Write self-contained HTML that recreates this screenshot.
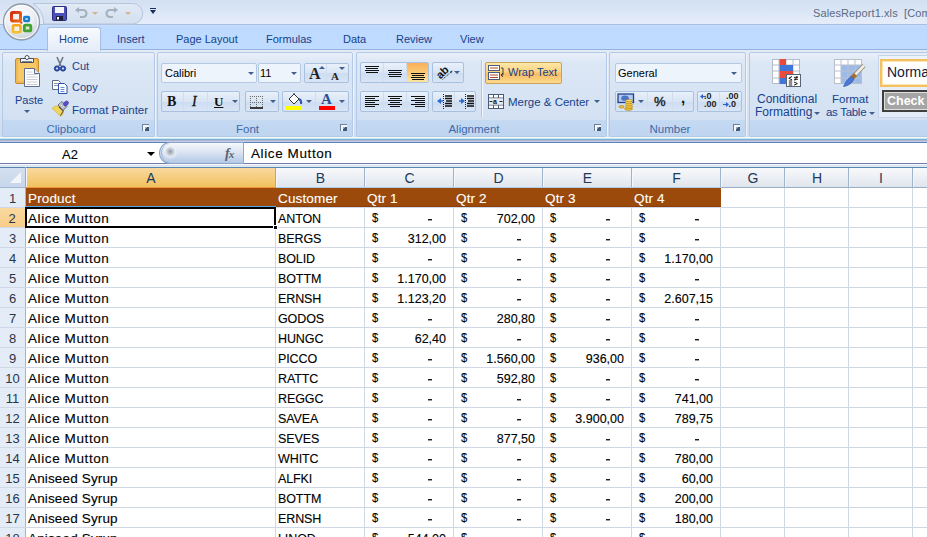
<!DOCTYPE html>
<html><head><meta charset="utf-8">
<style>
*{margin:0;padding:0;box-sizing:border-box}
html,body{width:927px;height:537px;overflow:hidden;background:#fff;font-family:"Liberation Sans",sans-serif;position:relative}
div,span{position:absolute}
span{white-space:nowrap}
svg{overflow:visible}
.t{font-size:11px;color:#15428b;white-space:nowrap;line-height:13px}
#title{left:0;top:0;width:927px;height:25px;background:linear-gradient(#d3e0f2,#d9e5f5 40%,#e4ecf9 90%);border-bottom:1px solid #a9bfe0}
#tabs{left:0;top:25px;width:927px;height:24px;background:linear-gradient(#c8defa,#bfdaff 10%,#bfdbff)}
#ribbon{left:0;top:49px;width:927px;height:91px;background:linear-gradient(#e2eaf6,#d6e3f3 70%,#cbdcf0);border-top:1px solid #94b2dc}
.grp{height:85px;border:1px solid #b3c9e6;border-radius:2px;background:linear-gradient(#e8eff9,#dce7f5 12%,#d6e3f3 60%,#d0def2);overflow:hidden;box-shadow:1px 0 0 #eef3fa}
.glbl2{left:0;width:100%;bottom:0;height:16px;background:linear-gradient(#c4d9f2,#bfd5f0)}
.sep{width:1px;background:#d0dded}
.lines i{position:absolute;left:0;width:14px;height:1px;background:#111}
.glbl{left:0;bottom:0;height:16px;z-index:1;text-align:center;font-size:11.5px;color:#3e6aaa;line-height:19px;white-space:nowrap}
.launch{width:7px;height:7px;border-top:1px solid #6f8099;border-left:1px solid #6f8099;background:#f4f8fc;bottom:5px;right:5px;z-index:2}
.launch:after{content:'';position:absolute;right:0;bottom:0;width:4px;height:4px;background:linear-gradient(135deg,#9ab 30%,#3d5a7a 31%)}
.btngrp{border:1px solid #a9c0df;border-radius:2px;background:linear-gradient(#e8f0fa,#d9e5f5 50%,#cddcf1 51%,#d9e5f5)}
.combo{border:1px solid #b6c9e2;border-radius:2px;background:#eef4fb}
.arr{width:0;height:0;border-left:3px solid transparent;border-right:3px solid transparent;border-top:3px solid #3f5f8c}
#grid{left:0;top:0;width:927px;height:537px;overflow:hidden}
#fbar{left:0;top:140px;width:927px;height:27px;background:#fff}
.ch{top:167px;height:21px;background:linear-gradient(#f8f9fb,#eceff4 50%,#e0e5ed);border-top:1px solid #5c86b0;border-bottom:1px solid #9aaec8;box-shadow:inset 1px 0 0 #f4f7fb;text-align:center;font-size:14px;color:#1e395b;line-height:21px}
.ch.sel{background:linear-gradient(#f9d99f,#f1c15f);border-bottom-color:#f29536}
.corner{left:0;top:167px;width:26px;height:21px;background:linear-gradient(#d4e0f0,#c7d6ea);border-top:1px solid #5c80ad;border-right:1px solid #9eb6ce;border-bottom:1px solid #9eb6ce}
.tri{left:10px;top:172px;width:0;height:0;border-left:11px solid transparent;border-bottom:11px solid #f2f5fa}
.rh{left:0;width:25px;height:20px;background:#e4ecf7;text-align:center;font-size:13px;color:#2a3444;line-height:22px}
.rh.sel{background:linear-gradient(#f9d99f,#f7cd88);border-top:1px solid #f29536;border-bottom:1px solid #f29536;border-right:1px solid #f29536}
.hl{left:0;width:927px;height:1px;background:#d0d7e5}
.hl2{left:0;width:25px;height:1px;background:#9eb6ce}
.vl2{left:25px;top:167px;width:1px;height:370px;background:#9eb6ce}
.vl{top:188px;width:1px;height:370px;background:#d0d7e5}
.vh{top:168px;width:1px;height:20px;background:#9fb3cc}
.brown{background:#9b4a0b}
.c{height:20px;font-size:13.5px;line-height:20px;color:#000;white-space:nowrap;letter-spacing:0.15px;-webkit-text-stroke:0.12px #000}
.c.w{-webkit-text-stroke:0.12px #fff}
.c.dl{font-size:14px;transform:scaleX(0.9);transform-origin:0 0;-webkit-text-stroke:0.1px #000}
.c.k{font-size:12.5px;letter-spacing:-0.1px}
.c.w{color:#fff}
.c.n{font-size:12.5px;letter-spacing:0}
.selbox{left:25px;top:207px;width:251px;height:21px;border:2px solid #000}
</style></head><body>

<div id="title"></div>
<svg style="position:absolute;left:0;top:0" width="150" height="26" viewBox="0 0 150 26">
  <defs><linearGradient id="qg" x1="0" y1="0" x2="0" y2="1"><stop offset="0" stop-color="#e1eaf6"/><stop offset="1" stop-color="#d3e0f0"/></linearGradient></defs>
  <path d="M33 3.5H132.5A10.25 10.25 0 0 1 132.5 24H43.5A22 22 0 0 0 33 3.5Z" fill="url(#qg)" stroke="#b5c6dc" stroke-width="1"/>
</svg>
<span class="t" style="left:813px;top:7px;color:#5c6a80;font-size:11px;letter-spacing:0.1px">SalesReport1.xls&nbsp; [Com</span>
<div id="tabs"></div>
<span class="t" style="left:59px;top:33px">Home</span>
<span class="t" style="left:117px;top:33px">Insert</span>
<span class="t" style="left:176px;top:33px">Page Layout</span>
<span class="t" style="left:266px;top:33px">Formulas</span>
<span class="t" style="left:343px;top:33px">Data</span>
<span class="t" style="left:396px;top:33px">Review</span>
<span class="t" style="left:460px;top:33px">View</span>
<div id="ribbon"></div>
<div style="left:47px;top:27px;width:54px;height:24px;border:1px solid #a6bfe0;border-bottom:none;border-radius:3px 3px 0 0;background:linear-gradient(#f8fbff,#e4ecf8)"></div>
<span class="t" style="left:59px;top:33px">Home</span>
<!-- groups -->
<div class="grp" style="left:2px;top:52px;width:153px"><div class="glbl2"></div><div class="glbl" style="width:136px">Clipboard</div><div class="launch"></div></div>
<div class="grp" style="left:157px;top:52px;width:196px"><div class="glbl2"></div><div class="glbl" style="width:179px">Font</div><div class="launch"></div></div>
<div class="grp" style="left:356px;top:52px;width:251px"><div class="glbl2"></div><div class="glbl" style="width:234px">Alignment</div><div class="launch"></div></div>
<div class="grp" style="left:609px;top:52px;width:137px"><div class="glbl2"></div><div class="glbl" style="width:120px">Number</div><div class="launch"></div></div>
<div class="grp" style="left:749px;top:52px;width:200px"><div class="glbl2" style="width:100%"></div></div>

<!-- Clipboard -->
<svg style="position:absolute;left:14px;top:55px" width="28" height="33" viewBox="0 0 28 33">
  <rect x="1.5" y="3.5" width="23" height="25" rx="1.5" fill="#f2b851" stroke="#c68a2e"/>
  <rect x="4" y="6" width="18" height="20" fill="#f6c866"/>
  <path d="M6.5 3.5h13v4h-13z" fill="#f2f4f7" stroke="#4a4f5c"/>
  <path d="M8 6.5h10" stroke="#7b8190"/>
  <circle cx="13" cy="2.5" r="2" fill="#fff" stroke="#4a4f5c"/>
  <path d="M10.5 13.5h10l5 5v13h-15z" fill="#fff" stroke="#5e6c85"/>
  <path d="M20.5 13.5v5h5" fill="#e8edf5" stroke="#5e6c85"/>
  <path d="M12.5 17h6M12.5 19.5h11M12.5 22h11M12.5 24.5h11M12.5 27h11M12.5 29.5h11" stroke="#b9c2d0" stroke-width="0.8"/>
</svg>
<span class="t" style="left:15px;top:94px">Paste</span>
<div class="arr" style="left:24px;top:110px"></div>
<svg style="position:absolute;left:54px;top:57px" width="12" height="15" viewBox="0 0 12 15">
  <path d="M3 0l4 9M9 0L5 9" stroke="#6f7784" stroke-width="1.6"/>
  <circle cx="3" cy="11.5" r="2.6" fill="#2f56b8" stroke="#1f3a8a"/>
  <circle cx="9" cy="11.5" r="2.6" fill="#2f56b8" stroke="#1f3a8a"/>
  <circle cx="3" cy="11.5" r="1" fill="#e8eefc"/><circle cx="9" cy="11.5" r="1" fill="#e8eefc"/>
</svg>
<span class="t" style="left:72px;top:60px">Cut</span>
<svg style="position:absolute;left:52px;top:80px" width="16" height="14" viewBox="0 0 16 14">
  <path d="M0.5 0.5h6l2 2v7h-8z" fill="#fff" stroke="#5f6b80"/>
  <path d="M2 3.5h4M2 5.5h4" stroke="#8d97a8"/>
  <path d="M6.5 3.5h6l2.5 2.5v7.5h-8.5z" fill="#fff" stroke="#2c52a8"/>
  <path d="M8.5 7.5h4M8.5 9.5h4M8.5 11.5h4" stroke="#6d8ccc"/>
</svg>
<span class="t" style="left:72px;top:81px">Copy</span>
<svg style="position:absolute;left:51px;top:101px" width="18" height="16" viewBox="0 0 18 16">
  <path d="M1 7.5C3 5 6 4.5 8 5l4.5 4.5c0.5 2-0.5 4.5-3 6C7 13 4 9.5 1 7.5z" fill="#f0d55a" stroke="#c9ac3c" stroke-width="0.6"/>
  <path d="M8 5.5l4 4" stroke="#2d2d2d" stroke-width="1.2"/>
  <path d="M9.5 14.5l3-5" stroke="#4a4a3a" stroke-width="1"/>
  <path d="M7 4l4-3.5 5 5-4 4z" fill="#b8bcc6" stroke="#555b68" stroke-width="0.8"/>
  <path d="M8.5 3.5l1-1M10 5l1-1M11.5 6.5l1-1" stroke="#fff" stroke-width="0.8"/>
  <ellipse cx="15" cy="2.5" rx="2.8" ry="2" transform="rotate(-45 15 2.5)" fill="#5b4fd0" stroke="#3a2f9a" stroke-width="0.6"/>
</svg>
<span class="t" style="left:72px;top:104px;font-size:11.5px">Format Painter</span>

<!-- Font -->
<div class="combo" style="left:161px;top:63px;width:96px;height:20px"></div>
<span class="t" style="left:165px;top:67px;color:#000">Calibri</span>
<div class="arr" style="left:248px;top:72px"></div>
<div class="combo" style="left:258px;top:63px;width:43px;height:20px"></div>
<span class="t" style="left:260px;top:67px;color:#000">11</span>
<div class="arr" style="left:291px;top:72px"></div>
<div class="btngrp" style="left:304px;top:63px;width:45px;height:20px"></div>
<div class="sep" style="left:326px;top:64px;height:18px"></div>
<span style="left:309px;top:66px;font-family:'Liberation Serif',serif;font-weight:bold;font-size:16px;line-height:16px;color:#222">A</span>
<div class="arr" style="left:319px;top:66px;border-top:none;border-bottom:3px solid #3f5f8c"></div>
<span style="left:331px;top:71px;font-family:'Liberation Serif',serif;font-weight:bold;font-size:11px;line-height:11px;color:#222">A</span>
<div class="arr" style="left:339px;top:67px"></div>

<div class="btngrp" style="left:161px;top:91px;width:79px;height:21px"></div>
<div class="sep" style="left:183px;top:92px;height:19px"></div>
<div class="sep" style="left:207px;top:92px;height:19px"></div>
<span style="left:167px;top:95px;font-family:'Liberation Serif',serif;font-weight:bold;font-size:14px;line-height:13px;color:#111">B</span>
<span style="left:192px;top:95px;font-family:'Liberation Serif',serif;font-style:italic;font-size:14px;line-height:13px;color:#111;-webkit-text-stroke:0.3px #111">I</span>
<span style="left:214px;top:95px;font-family:'Liberation Serif',serif;font-weight:bold;font-size:13px;line-height:13px;color:#111;text-decoration:underline">U</span>
<div class="arr" style="left:232px;top:100px"></div>
<div class="btngrp" style="left:245px;top:91px;width:34px;height:21px"></div>
<svg style="position:absolute;left:250px;top:96px" width="13" height="13" viewBox="0 0 13 13">
  <path d="M0 0.5h13M0 6.5h13M0.5 0v11M6.5 0v11M12.5 0v11" stroke="#6a6a6a" stroke-dasharray="1 1"/>
  <path d="M0 12h13" stroke="#111" stroke-width="1.6"/>
</svg>
<div class="arr" style="left:270px;top:100px"></div>
<div class="btngrp" style="left:282px;top:91px;width:67px;height:21px"></div>
<div class="sep" style="left:315px;top:92px;height:19px"></div>
<svg style="position:absolute;left:287px;top:93px" width="16" height="13" viewBox="0 0 16 13">
  <path d="M2 6l5-5 5 5-5 5z" fill="#fff" stroke="#333"/>
  <path d="M7 1V0" stroke="#333"/>
  <path d="M12 6c2 1 2.5 3 2 5" stroke="#2a57b5" stroke-width="2" fill="none"/>
</svg>
<div style="left:286px;top:106px;width:16px;height:4px;background:#ffff00"></div>
<div class="arr" style="left:306px;top:100px"></div>
<span style="left:321px;top:93px;font-family:'Liberation Serif',serif;font-weight:bold;font-size:15px;line-height:13px;color:#2b4f93">A</span>
<div style="left:319px;top:106px;width:16px;height:4px;background:#ff0000"></div>
<div class="arr" style="left:339px;top:100px"></div>

<!-- Alignment -->
<div class="btngrp" style="left:360px;top:62px;width:69px;height:21px"></div>
<div style="left:407px;top:63px;width:21px;height:19px;background:linear-gradient(#f8b058,#fbc874 50%,#fde5a0)"></div>
<div class="sep" style="left:383px;top:63px;height:19px"></div>
<div class="sep" style="left:406px;top:63px;height:19px"></div>
<div class="lines" style="left:365px;top:66px;width:14px"><i style="top:0"></i><i style="top:2px;left:1px;width:12px"></i><i style="top:4px"></i><i style="top:6px;left:1px;width:12px"></i></div>
<div class="lines" style="left:388px;top:70px;width:14px"><i style="top:0"></i><i style="top:2px;left:1px;width:12px"></i><i style="top:4px"></i><i style="top:6px;left:1px;width:12px"></i></div>
<div class="lines" style="left:411px;top:73px;width:14px"><i style="top:0"></i><i style="top:2px;left:1px;width:12px"></i><i style="top:4px"></i><i style="top:6px;left:1px;width:12px"></i></div>
<div class="btngrp" style="left:432px;top:62px;width:32px;height:21px"></div>
<svg style="position:absolute;left:436px;top:65px" width="18" height="16" viewBox="0 0 18 16">
  <path d="M6.5 14.5L15 7" stroke="#333" stroke-width="1" stroke-dasharray="1.2 0.8"/>
  <path d="M14 6.5l2.5-1-0.8 2.6z" fill="#333"/>
  <text x="6.5" y="11" text-anchor="middle" font-family="Liberation Sans" font-weight="bold" font-size="11" fill="#111" transform="rotate(-45 6.5 7.5)">ab</text>
</svg>
<div class="arr" style="left:454px;top:71px"></div>
<div class="btngrp" style="left:360px;top:91px;width:69px;height:21px"></div>
<div class="sep" style="left:383px;top:92px;height:19px"></div>
<div class="sep" style="left:406px;top:92px;height:19px"></div>
<div class="lines" style="left:365px;top:96px;width:14px"><i style="top:0px"></i><i style="top:2px;left:0px;width:10px"></i><i style="top:4px"></i><i style="top:6px;left:0px;width:10px"></i><i style="top:8px"></i><i style="top:10px;left:0px;width:10px"></i></div>
<div class="lines" style="left:388px;top:96px;width:14px"><i style="top:0px"></i><i style="top:2px;left:2px;width:10px"></i><i style="top:4px"></i><i style="top:6px;left:2px;width:10px"></i><i style="top:8px"></i><i style="top:10px;left:2px;width:10px"></i></div>
<div class="lines" style="left:411px;top:96px;width:14px"><i style="top:0px"></i><i style="top:2px;left:4px;width:10px"></i><i style="top:4px"></i><i style="top:6px;left:4px;width:10px"></i><i style="top:8px"></i><i style="top:10px;left:4px;width:10px"></i></div>
<div class="btngrp" style="left:432px;top:91px;width:44px;height:21px"></div>
<div class="sep" style="left:454px;top:92px;height:19px"></div>
<svg style="position:absolute;left:436px;top:94px" width="17" height="15" viewBox="0 0 17 15">
  <path d="M7.5 0v15" stroke="#222" stroke-dasharray="1 1"/>
  <path d="M9 2h7M9 4.5h7M10 7h6M9 9.5h7M9 12h7" stroke="#111" stroke-width="1.4"/>
  <path d="M1 7l4-3v6z" fill="#2f6ad0"/><path d="M4 7h3" stroke="#2f6ad0" stroke-width="1.5"/>
</svg>
<svg style="position:absolute;left:458px;top:94px" width="17" height="15" viewBox="0 0 17 15">
  <path d="M7.5 0v15" stroke="#222" stroke-dasharray="1 1"/>
  <path d="M9 2h7M9 4.5h7M10 7h6M9 9.5h7M9 12h7" stroke="#111" stroke-width="1.4"/>
  <path d="M7 7l-4-3v6z" fill="#2f6ad0"/><path d="M1 7h3" stroke="#2f6ad0" stroke-width="1.5"/>
</svg>
<div style="left:481px;top:60px;width:1px;height:57px;background:#b3c7e1"></div>
<div style="left:482px;top:60px;width:1px;height:57px;background:#f3f7fc"></div>
<div style="left:485px;top:62px;width:77px;height:22px;border:1px solid #c9a25a;border-radius:2px;background:linear-gradient(#fde7a8,#fbd27f 45%,#f8bd62 55%,#fcd98d)"></div>
<svg style="position:absolute;left:488px;top:65px" width="17" height="15" viewBox="0 0 17 15">
  <rect x="0.5" y="0.5" width="11" height="5" fill="#fff" stroke="#4a5a78"/>
  <rect x="0.5" y="7.5" width="11" height="7" fill="#fff" stroke="#4a5a78"/>
  <path d="M2 3h8M2 10h8M2 12.5h8" stroke="#b04a2a"/>
  <path d="M13 3h2v7h-2M13 10l2-2M13 10l2 2" stroke="#333" fill="none" stroke-width="0.9"/>
</svg>
<span class="t" style="left:508px;top:66px">Wrap Text</span>
<svg style="position:absolute;left:488px;top:94px" width="16" height="15" viewBox="0 0 16 15">
  <rect x="0.5" y="0.5" width="15" height="14" fill="#fff" stroke="#4a5a78"/>
  <path d="M0.5 4h15M0.5 11h15M5.5 0.5v3.5M10.5 0.5v3.5M5.5 11v4M10.5 11v4" stroke="#4a5a78"/>
  <rect x="1" y="4.5" width="14" height="6" fill="#e4e9f2"/>
  <path d="M1.5 7.5h3M11.5 7.5h3" stroke="#222"/>
  <text x="5" y="10" font-family="Liberation Sans" font-weight="bold" font-size="7" fill="#111">a</text>
</svg>
<span class="t" style="left:508px;top:96px;font-size:11.5px">Merge &amp; Center</span>
<div class="arr" style="left:594px;top:100px"></div>

<!-- Number -->
<div class="combo" style="left:615px;top:63px;width:127px;height:20px"></div>
<span class="t" style="left:618px;top:67px;color:#000">General</span>
<div class="arr" style="left:731px;top:72px"></div>
<div class="btngrp" style="left:615px;top:91px;width:79px;height:21px"></div>
<div class="sep" style="left:647px;top:92px;height:19px"></div>
<div class="sep" style="left:672px;top:92px;height:19px"></div>
<svg style="position:absolute;left:617px;top:93px" width="18" height="18" viewBox="0 0 18 18">
  <rect x="1" y="1" width="15.5" height="8.5" fill="#b5cbee" stroke="#1f3f94" stroke-width="1.3"/>
  <ellipse cx="8" cy="5.2" rx="3.8" ry="2.6" fill="#4b74c2"/>
  <ellipse cx="4.5" cy="13.8" rx="2.6" ry="1.3" fill="#f0bd2e" stroke="#9c7412" stroke-width="0.5"/>
  <ellipse cx="11.5" cy="16" rx="4" ry="1.4" fill="#f0bd2e" stroke="#9c7412" stroke-width="0.5"/>
  <ellipse cx="12" cy="13.8" rx="3.8" ry="1.4" fill="#f5c93c" stroke="#9c7412" stroke-width="0.5"/>
  <ellipse cx="12" cy="11.6" rx="3.6" ry="1.3" fill="#f5c93c" stroke="#9c7412" stroke-width="0.5"/>
  <ellipse cx="12" cy="9.5" rx="3.4" ry="1.3" fill="#f8d24a" stroke="#9c7412" stroke-width="0.5"/>
  <ellipse cx="12" cy="7.6" rx="3.2" ry="1.2" fill="#fadb62" stroke="#9c7412" stroke-width="0.5"/>
</svg>
<div class="arr" style="left:638px;top:100px"></div>
<span style="left:654px;top:96px;font-size:13px;line-height:12px;color:#1a1a1a;-webkit-text-stroke:0.4px #1a1a1a">%</span>
<span style="left:681px;top:91px;font-weight:bold;font-size:15px;line-height:13px;color:#111">,</span>
<div class="btngrp" style="left:697px;top:91px;width:45px;height:21px"></div>
<div class="sep" style="left:719px;top:92px;height:19px"></div>
<span style="left:704px;top:92px;font-weight:bold;font-size:9px;line-height:8px;color:#222">.0<br>.00</span>
<svg style="position:absolute;left:700px;top:94px" width="6" height="5" viewBox="0 0 6 5"><path d="M0 2.5L3 0v5z" fill="#2f62c8"/><path d="M2 2.5h4" stroke="#2f62c8" stroke-width="1.2"/></svg>
<span style="left:726px;top:92px;font-weight:bold;font-size:9px;line-height:8px;color:#222">.00<br>&nbsp;.0</span>
<svg style="position:absolute;left:723px;top:102px" width="6" height="5" viewBox="0 0 6 5"><path d="M6 2.5L3 0v5z" fill="#2f62c8"/><path d="M0 2.5h4" stroke="#2f62c8" stroke-width="1.2"/></svg>

<!-- Styles -->
<svg style="position:absolute;left:772px;top:59px" width="30" height="28" viewBox="0 0 30 28">
  <rect x="0" y="0" width="28" height="25" fill="#fff"/>
  <path d="M0.5 0v25M7 0v25M14 0v25M21 0v25M27.5 0v25M0 0.5h28M0 6h28M0 12h28M0 19h28M0 24.5h28" stroke="#b4bcc9" stroke-width="1"/>
  <rect x="7.5" y="0" width="6.5" height="6" fill="#ea4a3c"/>
  <rect x="7.5" y="6" width="13.5" height="6" fill="#4076d8"/>
  <rect x="7.5" y="12" width="13.5" height="7" fill="#ea4a3c"/>
  <rect x="7.5" y="19" width="6.5" height="6" fill="#4076d8"/>
  <rect x="14.5" y="15.5" width="14" height="12" fill="#fff" stroke="#596477"/>
  <path d="M20 17.5L16.8 19.2 20 20.9M16.8 22h3.4M22 18.3h4M22 20.3h4M25.2 17l-2.4 4.6M16.8 24h3.4M16.8 26h3.4M22 23l3.4 1.6L22 26.2" stroke="#1a1a1a" stroke-width="1" fill="none"/>
</svg>
<span class="t" style="left:757px;top:93px;font-size:12px">Conditional</span>
<span class="t" style="left:755px;top:106px;font-size:12px">Formatting</span>
<div class="arr" style="left:814px;top:112px"></div>
<svg style="position:absolute;left:834px;top:59px" width="31" height="28" viewBox="0 0 31 28">
  <rect x="0" y="0" width="28" height="25" fill="#fff"/>
  <rect x="7" y="6" width="21" height="19" fill="#9dbbe9"/>
  <path d="M0.5 0v25M7 0v25M14 0v25M21 0v25M27.5 0v25M0 0.5h28M0 6h28M0 12h28M0 19h28M0 24.5h28" stroke="#b9c0cc" stroke-width="1"/>
  <path d="M30 6.5L20 17" stroke="#8b8372" stroke-width="4"/>
  <path d="M30 6.5L20 17" stroke="#f3eee2" stroke-width="2.6"/>
  <path d="M21.5 15.5l-3.5 3.5" stroke="#a86d2c" stroke-width="4.5"/>
  <path d="M17 17.5c-3 2-6 6-7.5 10 4.5-0.5 8.5-3 10.5-7.5z" fill="#4a78d2" stroke="#2c58b0" stroke-width="0.6"/>
</svg>
<span class="t" style="left:832px;top:93px;font-size:11.5px">Format</span>
<span class="t" style="left:826px;top:106px;font-size:11.5px;letter-spacing:-0.3px">as Table</span>
<div class="arr" style="left:869px;top:112px"></div>
<div style="left:878px;top:55px;width:60px;height:63px;border:1px solid #c6d6ea;background:linear-gradient(#edf3fb,#e2ebf7)"></div>
<div style="left:880px;top:59px;width:60px;height:28px;border:2px solid #f5c061;background:#fff;box-shadow:inset 0 0 0 1px #fde6b0"></div>
<span style="left:887px;top:65px;font-size:14px;line-height:15px;color:#101840">Normal</span>
<div style="left:882px;top:90px;width:60px;height:22px;border:2px solid #3f3f3f;background:#a5a5a5;box-shadow:inset 0 0 0 1px #e0e0e0"></div>
<span style="left:887px;top:94px;font-size:12.5px;font-weight:bold;line-height:14px;color:#fff">Check Cell</span>
<!-- Office button & QAT -->
<svg style="position:absolute;left:0;top:0" width="46" height="46" viewBox="0 0 46 46">
  <defs>
    <radialGradient id="ob" cx="45%" cy="35%" r="65%"><stop offset="0" stop-color="#ffffff"/><stop offset="0.55" stop-color="#eef1f5"/><stop offset="1" stop-color="#c9d0da"/></radialGradient>
  </defs>
  <circle cx="21.5" cy="22" r="18" fill="url(#ob)" stroke="#8f9aaa" stroke-width="1.3"/>
  <circle cx="21.5" cy="22" r="16.5" fill="none" stroke="#ffffff" stroke-width="1"/>
  <defs><linearGradient id="rg" x1="0" y1="0" x2="1" y2="1"><stop offset="0" stop-color="#d42a12"/><stop offset="1" stop-color="#f06a12"/></linearGradient>
  <linearGradient id="og" x1="0" y1="0" x2="0" y2="1"><stop offset="0" stop-color="#f9a51a"/><stop offset="1" stop-color="#f6c02a"/></linearGradient></defs>
  <rect x="11.5" y="12.5" width="9" height="8.5" rx="1.2" fill="#f3f1ef" stroke="url(#rg)" stroke-width="3"/>
  <rect x="13" y="25.2" width="7.5" height="7" rx="1.2" fill="#f3f1e8" stroke="url(#og)" stroke-width="2.6"/>
  <rect x="24.2" y="17" width="4.8" height="4" rx="0.8" fill="#e8f0f8" stroke="#1b7fd0" stroke-width="2.4"/>
  <rect x="24.3" y="25.2" width="6.5" height="5.7" rx="1.2" fill="#d8ecd0" stroke="#43a130" stroke-width="2.8"/>
  <circle cx="21.3" cy="22.6" r="1.2" fill="#e04a14"/>
</svg>
<svg style="position:absolute;left:52px;top:6px" width="15" height="15" viewBox="0 0 15 15">
  <rect x="0.5" y="0.5" width="14" height="14" rx="1" fill="#4b50b8" stroke="#2b2f80"/>
  <rect x="3" y="1" width="9" height="6" fill="#f4f6fb"/>
  <rect x="4" y="10" width="7" height="4.5" fill="#1d1f3a"/>
  <rect x="5" y="11" width="2" height="2.5" fill="#fff"/>
</svg>
<svg style="position:absolute;left:74px;top:6px" width="14" height="14" viewBox="0 0 14 14">
  <path d="M4 4h5a3.5 3.5 0 0 1 0 7H6" stroke="#a7b1be" stroke-width="2.2" fill="none"/>
  <path d="M1 4l4-3v6z" fill="#a7b1be"/>
</svg>
<div class="arr" style="left:92px;top:12px;border-top-color:#d2b48f"></div>
<svg style="position:absolute;left:105px;top:6px" width="14" height="14" viewBox="0 0 14 14">
  <path d="M10 4H5a3.5 3.5 0 0 0 0 7h3" stroke="#a7b1be" stroke-width="2.2" fill="none"/>
  <path d="M13 4l-4-3v6z" fill="#a7b1be"/>
</svg>
<div class="arr" style="left:125px;top:12px;border-top-color:#d2b48f"></div>
<div style="left:150px;top:8px;width:6px;height:1px;background:#1a2d5c"></div>
<div class="arr" style="left:150px;top:10px;border-left-width:3px;border-right-width:3px;border-top:4px solid #1a2d5c"></div>

<div id="fbar">
  <div style="left:0;top:-3px;width:927px;height:1px;background:#f2f7f8"></div>
  <div style="left:0;top:-2px;width:927px;height:1px;background:#c8e8f2"></div>
  <div style="left:0;top:-1px;width:927px;height:1px;background:#7db0d6"></div>
  <div style="left:0;top:0;width:927px;height:1px;background:#b2b6cc"></div>
  <div style="left:0;top:1px;width:927px;height:1px;background:#c3caec"></div>
  <div style="left:0;top:2px;width:927px;height:1px;background:#5a84b8"></div>
  <div style="left:0;top:3px;width:927px;height:20px;background:#fff"></div>
  <div style="left:0;top:23px;width:927px;height:1px;background:#6e7cae"></div>
  <div style="left:0;top:24px;width:927px;height:1px;background:#f6faf2"></div>
  <div style="left:0;top:25px;width:927px;height:1px;background:#dedefa"></div>
  <div style="left:0;top:26px;width:927px;height:1px;background:#d8eef0"></div>
  <span style="left:62px;top:7px;font-size:13px;color:#000;line-height:15px;-webkit-text-stroke:0.1px #000">A2</span>
  <div class="arr" style="left:147px;top:12px;border-left-width:4px;border-right-width:4px;border-top:4px solid #000"></div>
  <div style="left:159px;top:2px;width:85px;height:22px;border:1px solid #8aa4cc;border-right:none;border-radius:11px 0 0 11px;background:linear-gradient(#f6f8fb,#dfe7f3 40%,#b3c8e7)"></div>
  <div style="left:161px;top:4px;width:16px;height:18px;border-radius:50%;border-left:1px solid #9fb3d0;background:radial-gradient(circle at 55% 42%,#8f97a2 0,#b9c1cc 18%,rgba(240,244,250,0.6) 40%,rgba(255,255,255,0) 60%)"></div>
  <span style="left:225px;top:6px;font-family:'Liberation Serif',serif;font-style:italic;font-weight:bold;font-size:14px;color:#5a626d;line-height:16px;letter-spacing:-1px">f<span style="position:relative;font-size:11px">x</span></span>
  <div style="left:243px;top:3px;width:1px;height:20px;background:#8ea8ce"></div>
  <span class="c" style="left:251px;top:5px;height:18px;line-height:18px;letter-spacing:0.6px">Alice Mutton</span>
</div>

<div id="grid"><div class="ch sel" style="left:26px;width:250px">A</div>
<div class="ch" style="left:276px;width:89px">B</div>
<div class="ch" style="left:365px;width:89px">C</div>
<div class="ch" style="left:454px;width:89px">D</div>
<div class="ch" style="left:543px;width:89px">E</div>
<div class="ch" style="left:632px;width:89px">F</div>
<div class="ch" style="left:721px;width:64px">G</div>
<div class="ch" style="left:785px;width:64px">H</div>
<div class="ch" style="left:849px;width:64px">I</div>
<div class="ch" style="left:913px;width:64px">J</div>
<div class="corner"></div><div class="tri"></div>
<div class="hl2" style="top:207px"></div>
<div class="hl2" style="top:227px"></div>
<div class="hl2" style="top:247px"></div>
<div class="hl2" style="top:267px"></div>
<div class="hl2" style="top:287px"></div>
<div class="hl2" style="top:307px"></div>
<div class="hl2" style="top:327px"></div>
<div class="hl2" style="top:347px"></div>
<div class="hl2" style="top:367px"></div>
<div class="hl2" style="top:387px"></div>
<div class="hl2" style="top:407px"></div>
<div class="hl2" style="top:427px"></div>
<div class="hl2" style="top:447px"></div>
<div class="hl2" style="top:467px"></div>
<div class="hl2" style="top:487px"></div>
<div class="hl2" style="top:507px"></div>
<div class="hl2" style="top:527px"></div>
<div class="hl2" style="top:547px"></div>
<div class="vl2"></div>
<div class="rh" style="top:188px">1</div>
<div class="rh sel" style="top:207px;height:21px;width:26px;padding-right:1px;line-height:21px">2</div>
<div class="rh" style="top:228px">3</div>
<div class="rh" style="top:248px">4</div>
<div class="rh" style="top:268px">5</div>
<div class="rh" style="top:288px">6</div>
<div class="rh" style="top:308px">7</div>
<div class="rh" style="top:328px">8</div>
<div class="rh" style="top:348px">9</div>
<div class="rh" style="top:368px">10</div>
<div class="rh" style="top:388px">11</div>
<div class="rh" style="top:408px">12</div>
<div class="rh" style="top:428px">13</div>
<div class="rh" style="top:448px">14</div>
<div class="rh" style="top:468px">15</div>
<div class="rh" style="top:488px">16</div>
<div class="rh" style="top:508px">17</div>
<div class="rh" style="top:528px">18</div>
<div class="hl" style="top:207px"></div>
<div class="hl" style="top:227px"></div>
<div class="hl" style="top:247px"></div>
<div class="hl" style="top:267px"></div>
<div class="hl" style="top:287px"></div>
<div class="hl" style="top:307px"></div>
<div class="hl" style="top:327px"></div>
<div class="hl" style="top:347px"></div>
<div class="hl" style="top:367px"></div>
<div class="hl" style="top:387px"></div>
<div class="hl" style="top:407px"></div>
<div class="hl" style="top:427px"></div>
<div class="hl" style="top:447px"></div>
<div class="hl" style="top:467px"></div>
<div class="hl" style="top:487px"></div>
<div class="hl" style="top:507px"></div>
<div class="hl" style="top:527px"></div>
<div class="hl" style="top:547px"></div>
<div class="vl" style="left:275px"></div>
<div class="vh" style="left:275px"></div>
<div class="vl" style="left:364px"></div>
<div class="vh" style="left:364px"></div>
<div class="vl" style="left:453px"></div>
<div class="vh" style="left:453px"></div>
<div class="vl" style="left:542px"></div>
<div class="vh" style="left:542px"></div>
<div class="vl" style="left:631px"></div>
<div class="vh" style="left:631px"></div>
<div class="vl" style="left:720px"></div>
<div class="vh" style="left:720px"></div>
<div class="vl" style="left:784px"></div>
<div class="vh" style="left:784px"></div>
<div class="vl" style="left:848px"></div>
<div class="vh" style="left:848px"></div>
<div class="vl" style="left:912px"></div>
<div class="vh" style="left:912px"></div>
<div class="vl" style="left:976px"></div>
<div class="vh" style="left:976px"></div>
<div style="left:275px;top:168px;width:1px;height:20px;background:#f29536"></div>
<div style="left:25px;top:168px;width:1px;height:20px;background:#f29536"></div>
<div style="left:25px;top:187px;width:251px;height:1px;background:#f29536"></div>
<div class="brown" style="left:26px;top:188px;width:695px;height:19px;border-bottom:1px solid #8a3f08"></div>
<div style="left:276px;top:187px;width:445px;height:1px;background:#a9cdee"></div>
<div class="c w" style="left:28px;top:189px">Product</div>
<div class="c w" style="left:278px;top:189px">Customer</div>
<div class="c w" style="left:367px;top:189px">Qtr 1</div>
<div class="c w" style="left:456px;top:189px">Qtr 2</div>
<div class="c w" style="left:545px;top:189px">Qtr 3</div>
<div class="c w" style="left:634px;top:189px">Qtr 4</div>
<div class="c" style="left:28px;top:209px;letter-spacing:0.6px">Alice Mutton</div>
<div class="c k" style="left:278px;top:209px">ANTON</div>
<div class="c n dl" style="left:372px;top:208px">$</div>
<div style="left:428px;top:219px;width:4px;height:2px;background:linear-gradient(#1a1a1a 50%,#9a9a9a 50%)"></div>
<div class="c n dl" style="left:461px;top:208px">$</div>
<div class="c n r" style="right:392px;top:209px">702,00</div>
<div class="c n dl" style="left:550px;top:208px">$</div>
<div style="left:606px;top:219px;width:4px;height:2px;background:linear-gradient(#1a1a1a 50%,#9a9a9a 50%)"></div>
<div class="c n dl" style="left:639px;top:208px">$</div>
<div style="left:695px;top:219px;width:4px;height:2px;background:linear-gradient(#1a1a1a 50%,#9a9a9a 50%)"></div>
<div class="c" style="left:28px;top:229px;letter-spacing:0.6px">Alice Mutton</div>
<div class="c k" style="left:278px;top:229px">BERGS</div>
<div class="c n dl" style="left:372px;top:228px">$</div>
<div class="c n r" style="right:481px;top:229px">312,00</div>
<div class="c n dl" style="left:461px;top:228px">$</div>
<div style="left:517px;top:239px;width:4px;height:2px;background:linear-gradient(#1a1a1a 50%,#9a9a9a 50%)"></div>
<div class="c n dl" style="left:550px;top:228px">$</div>
<div style="left:606px;top:239px;width:4px;height:2px;background:linear-gradient(#1a1a1a 50%,#9a9a9a 50%)"></div>
<div class="c n dl" style="left:639px;top:228px">$</div>
<div style="left:695px;top:239px;width:4px;height:2px;background:linear-gradient(#1a1a1a 50%,#9a9a9a 50%)"></div>
<div class="c" style="left:28px;top:249px;letter-spacing:0.6px">Alice Mutton</div>
<div class="c k" style="left:278px;top:249px">BOLID</div>
<div class="c n dl" style="left:372px;top:248px">$</div>
<div style="left:428px;top:259px;width:4px;height:2px;background:linear-gradient(#1a1a1a 50%,#9a9a9a 50%)"></div>
<div class="c n dl" style="left:461px;top:248px">$</div>
<div style="left:517px;top:259px;width:4px;height:2px;background:linear-gradient(#1a1a1a 50%,#9a9a9a 50%)"></div>
<div class="c n dl" style="left:550px;top:248px">$</div>
<div style="left:606px;top:259px;width:4px;height:2px;background:linear-gradient(#1a1a1a 50%,#9a9a9a 50%)"></div>
<div class="c n dl" style="left:639px;top:248px">$</div>
<div class="c n r" style="right:214px;top:249px">1.170,00</div>
<div class="c" style="left:28px;top:269px;letter-spacing:0.6px">Alice Mutton</div>
<div class="c k" style="left:278px;top:269px">BOTTM</div>
<div class="c n dl" style="left:372px;top:268px">$</div>
<div class="c n r" style="right:481px;top:269px">1.170,00</div>
<div class="c n dl" style="left:461px;top:268px">$</div>
<div style="left:517px;top:279px;width:4px;height:2px;background:linear-gradient(#1a1a1a 50%,#9a9a9a 50%)"></div>
<div class="c n dl" style="left:550px;top:268px">$</div>
<div style="left:606px;top:279px;width:4px;height:2px;background:linear-gradient(#1a1a1a 50%,#9a9a9a 50%)"></div>
<div class="c n dl" style="left:639px;top:268px">$</div>
<div style="left:695px;top:279px;width:4px;height:2px;background:linear-gradient(#1a1a1a 50%,#9a9a9a 50%)"></div>
<div class="c" style="left:28px;top:289px;letter-spacing:0.6px">Alice Mutton</div>
<div class="c k" style="left:278px;top:289px">ERNSH</div>
<div class="c n dl" style="left:372px;top:288px">$</div>
<div class="c n r" style="right:481px;top:289px">1.123,20</div>
<div class="c n dl" style="left:461px;top:288px">$</div>
<div style="left:517px;top:299px;width:4px;height:2px;background:linear-gradient(#1a1a1a 50%,#9a9a9a 50%)"></div>
<div class="c n dl" style="left:550px;top:288px">$</div>
<div style="left:606px;top:299px;width:4px;height:2px;background:linear-gradient(#1a1a1a 50%,#9a9a9a 50%)"></div>
<div class="c n dl" style="left:639px;top:288px">$</div>
<div class="c n r" style="right:214px;top:289px">2.607,15</div>
<div class="c" style="left:28px;top:309px;letter-spacing:0.6px">Alice Mutton</div>
<div class="c k" style="left:278px;top:309px">GODOS</div>
<div class="c n dl" style="left:372px;top:308px">$</div>
<div style="left:428px;top:319px;width:4px;height:2px;background:linear-gradient(#1a1a1a 50%,#9a9a9a 50%)"></div>
<div class="c n dl" style="left:461px;top:308px">$</div>
<div class="c n r" style="right:392px;top:309px">280,80</div>
<div class="c n dl" style="left:550px;top:308px">$</div>
<div style="left:606px;top:319px;width:4px;height:2px;background:linear-gradient(#1a1a1a 50%,#9a9a9a 50%)"></div>
<div class="c n dl" style="left:639px;top:308px">$</div>
<div style="left:695px;top:319px;width:4px;height:2px;background:linear-gradient(#1a1a1a 50%,#9a9a9a 50%)"></div>
<div class="c" style="left:28px;top:329px;letter-spacing:0.6px">Alice Mutton</div>
<div class="c k" style="left:278px;top:329px">HUNGC</div>
<div class="c n dl" style="left:372px;top:328px">$</div>
<div class="c n r" style="right:481px;top:329px">62,40</div>
<div class="c n dl" style="left:461px;top:328px">$</div>
<div style="left:517px;top:339px;width:4px;height:2px;background:linear-gradient(#1a1a1a 50%,#9a9a9a 50%)"></div>
<div class="c n dl" style="left:550px;top:328px">$</div>
<div style="left:606px;top:339px;width:4px;height:2px;background:linear-gradient(#1a1a1a 50%,#9a9a9a 50%)"></div>
<div class="c n dl" style="left:639px;top:328px">$</div>
<div style="left:695px;top:339px;width:4px;height:2px;background:linear-gradient(#1a1a1a 50%,#9a9a9a 50%)"></div>
<div class="c" style="left:28px;top:349px;letter-spacing:0.6px">Alice Mutton</div>
<div class="c k" style="left:278px;top:349px">PICCO</div>
<div class="c n dl" style="left:372px;top:348px">$</div>
<div style="left:428px;top:359px;width:4px;height:2px;background:linear-gradient(#1a1a1a 50%,#9a9a9a 50%)"></div>
<div class="c n dl" style="left:461px;top:348px">$</div>
<div class="c n r" style="right:392px;top:349px">1.560,00</div>
<div class="c n dl" style="left:550px;top:348px">$</div>
<div class="c n r" style="right:303px;top:349px">936,00</div>
<div class="c n dl" style="left:639px;top:348px">$</div>
<div style="left:695px;top:359px;width:4px;height:2px;background:linear-gradient(#1a1a1a 50%,#9a9a9a 50%)"></div>
<div class="c" style="left:28px;top:369px;letter-spacing:0.6px">Alice Mutton</div>
<div class="c k" style="left:278px;top:369px">RATTC</div>
<div class="c n dl" style="left:372px;top:368px">$</div>
<div style="left:428px;top:379px;width:4px;height:2px;background:linear-gradient(#1a1a1a 50%,#9a9a9a 50%)"></div>
<div class="c n dl" style="left:461px;top:368px">$</div>
<div class="c n r" style="right:392px;top:369px">592,80</div>
<div class="c n dl" style="left:550px;top:368px">$</div>
<div style="left:606px;top:379px;width:4px;height:2px;background:linear-gradient(#1a1a1a 50%,#9a9a9a 50%)"></div>
<div class="c n dl" style="left:639px;top:368px">$</div>
<div style="left:695px;top:379px;width:4px;height:2px;background:linear-gradient(#1a1a1a 50%,#9a9a9a 50%)"></div>
<div class="c" style="left:28px;top:389px;letter-spacing:0.6px">Alice Mutton</div>
<div class="c k" style="left:278px;top:389px">REGGC</div>
<div class="c n dl" style="left:372px;top:388px">$</div>
<div style="left:428px;top:399px;width:4px;height:2px;background:linear-gradient(#1a1a1a 50%,#9a9a9a 50%)"></div>
<div class="c n dl" style="left:461px;top:388px">$</div>
<div style="left:517px;top:399px;width:4px;height:2px;background:linear-gradient(#1a1a1a 50%,#9a9a9a 50%)"></div>
<div class="c n dl" style="left:550px;top:388px">$</div>
<div style="left:606px;top:399px;width:4px;height:2px;background:linear-gradient(#1a1a1a 50%,#9a9a9a 50%)"></div>
<div class="c n dl" style="left:639px;top:388px">$</div>
<div class="c n r" style="right:214px;top:389px">741,00</div>
<div class="c" style="left:28px;top:409px;letter-spacing:0.6px">Alice Mutton</div>
<div class="c k" style="left:278px;top:409px">SAVEA</div>
<div class="c n dl" style="left:372px;top:408px">$</div>
<div style="left:428px;top:419px;width:4px;height:2px;background:linear-gradient(#1a1a1a 50%,#9a9a9a 50%)"></div>
<div class="c n dl" style="left:461px;top:408px">$</div>
<div style="left:517px;top:419px;width:4px;height:2px;background:linear-gradient(#1a1a1a 50%,#9a9a9a 50%)"></div>
<div class="c n dl" style="left:550px;top:408px">$</div>
<div class="c n r" style="right:303px;top:409px">3.900,00</div>
<div class="c n dl" style="left:639px;top:408px">$</div>
<div class="c n r" style="right:214px;top:409px">789,75</div>
<div class="c" style="left:28px;top:429px;letter-spacing:0.6px">Alice Mutton</div>
<div class="c k" style="left:278px;top:429px">SEVES</div>
<div class="c n dl" style="left:372px;top:428px">$</div>
<div style="left:428px;top:439px;width:4px;height:2px;background:linear-gradient(#1a1a1a 50%,#9a9a9a 50%)"></div>
<div class="c n dl" style="left:461px;top:428px">$</div>
<div class="c n r" style="right:392px;top:429px">877,50</div>
<div class="c n dl" style="left:550px;top:428px">$</div>
<div style="left:606px;top:439px;width:4px;height:2px;background:linear-gradient(#1a1a1a 50%,#9a9a9a 50%)"></div>
<div class="c n dl" style="left:639px;top:428px">$</div>
<div style="left:695px;top:439px;width:4px;height:2px;background:linear-gradient(#1a1a1a 50%,#9a9a9a 50%)"></div>
<div class="c" style="left:28px;top:449px;letter-spacing:0.6px">Alice Mutton</div>
<div class="c k" style="left:278px;top:449px">WHITC</div>
<div class="c n dl" style="left:372px;top:448px">$</div>
<div style="left:428px;top:459px;width:4px;height:2px;background:linear-gradient(#1a1a1a 50%,#9a9a9a 50%)"></div>
<div class="c n dl" style="left:461px;top:448px">$</div>
<div style="left:517px;top:459px;width:4px;height:2px;background:linear-gradient(#1a1a1a 50%,#9a9a9a 50%)"></div>
<div class="c n dl" style="left:550px;top:448px">$</div>
<div style="left:606px;top:459px;width:4px;height:2px;background:linear-gradient(#1a1a1a 50%,#9a9a9a 50%)"></div>
<div class="c n dl" style="left:639px;top:448px">$</div>
<div class="c n r" style="right:214px;top:449px">780,00</div>
<div class="c" style="left:28px;top:469px">Aniseed Syrup</div>
<div class="c k" style="left:278px;top:469px">ALFKI</div>
<div class="c n dl" style="left:372px;top:468px">$</div>
<div style="left:428px;top:479px;width:4px;height:2px;background:linear-gradient(#1a1a1a 50%,#9a9a9a 50%)"></div>
<div class="c n dl" style="left:461px;top:468px">$</div>
<div style="left:517px;top:479px;width:4px;height:2px;background:linear-gradient(#1a1a1a 50%,#9a9a9a 50%)"></div>
<div class="c n dl" style="left:550px;top:468px">$</div>
<div style="left:606px;top:479px;width:4px;height:2px;background:linear-gradient(#1a1a1a 50%,#9a9a9a 50%)"></div>
<div class="c n dl" style="left:639px;top:468px">$</div>
<div class="c n r" style="right:214px;top:469px">60,00</div>
<div class="c" style="left:28px;top:489px">Aniseed Syrup</div>
<div class="c k" style="left:278px;top:489px">BOTTM</div>
<div class="c n dl" style="left:372px;top:488px">$</div>
<div style="left:428px;top:499px;width:4px;height:2px;background:linear-gradient(#1a1a1a 50%,#9a9a9a 50%)"></div>
<div class="c n dl" style="left:461px;top:488px">$</div>
<div style="left:517px;top:499px;width:4px;height:2px;background:linear-gradient(#1a1a1a 50%,#9a9a9a 50%)"></div>
<div class="c n dl" style="left:550px;top:488px">$</div>
<div style="left:606px;top:499px;width:4px;height:2px;background:linear-gradient(#1a1a1a 50%,#9a9a9a 50%)"></div>
<div class="c n dl" style="left:639px;top:488px">$</div>
<div class="c n r" style="right:214px;top:489px">200,00</div>
<div class="c" style="left:28px;top:509px">Aniseed Syrup</div>
<div class="c k" style="left:278px;top:509px">ERNSH</div>
<div class="c n dl" style="left:372px;top:508px">$</div>
<div style="left:428px;top:519px;width:4px;height:2px;background:linear-gradient(#1a1a1a 50%,#9a9a9a 50%)"></div>
<div class="c n dl" style="left:461px;top:508px">$</div>
<div style="left:517px;top:519px;width:4px;height:2px;background:linear-gradient(#1a1a1a 50%,#9a9a9a 50%)"></div>
<div class="c n dl" style="left:550px;top:508px">$</div>
<div style="left:606px;top:519px;width:4px;height:2px;background:linear-gradient(#1a1a1a 50%,#9a9a9a 50%)"></div>
<div class="c n dl" style="left:639px;top:508px">$</div>
<div class="c n r" style="right:214px;top:509px">180,00</div>
<div class="c" style="left:28px;top:529px">Aniseed Syrup</div>
<div class="c k" style="left:278px;top:529px">LINOD</div>
<div class="c n dl" style="left:372px;top:528px">$</div>
<div class="c n r" style="right:481px;top:529px">544,00</div>
<div class="c n dl" style="left:461px;top:528px">$</div>
<div style="left:517px;top:539px;width:4px;height:2px;background:linear-gradient(#1a1a1a 50%,#9a9a9a 50%)"></div>
<div class="c n dl" style="left:550px;top:528px">$</div>
<div style="left:606px;top:539px;width:4px;height:2px;background:linear-gradient(#1a1a1a 50%,#9a9a9a 50%)"></div>
<div class="c n dl" style="left:639px;top:528px">$</div>
<div style="left:695px;top:539px;width:4px;height:2px;background:linear-gradient(#1a1a1a 50%,#9a9a9a 50%)"></div>
<div style="left:26px;top:206px;width:250px;height:1px;background:#56a6e2"></div>
<div class="selbox"></div>
<div style="left:273px;top:225px;width:5px;height:5px;background:#000;border:1px solid #fff"></div></div>
</body></html>
